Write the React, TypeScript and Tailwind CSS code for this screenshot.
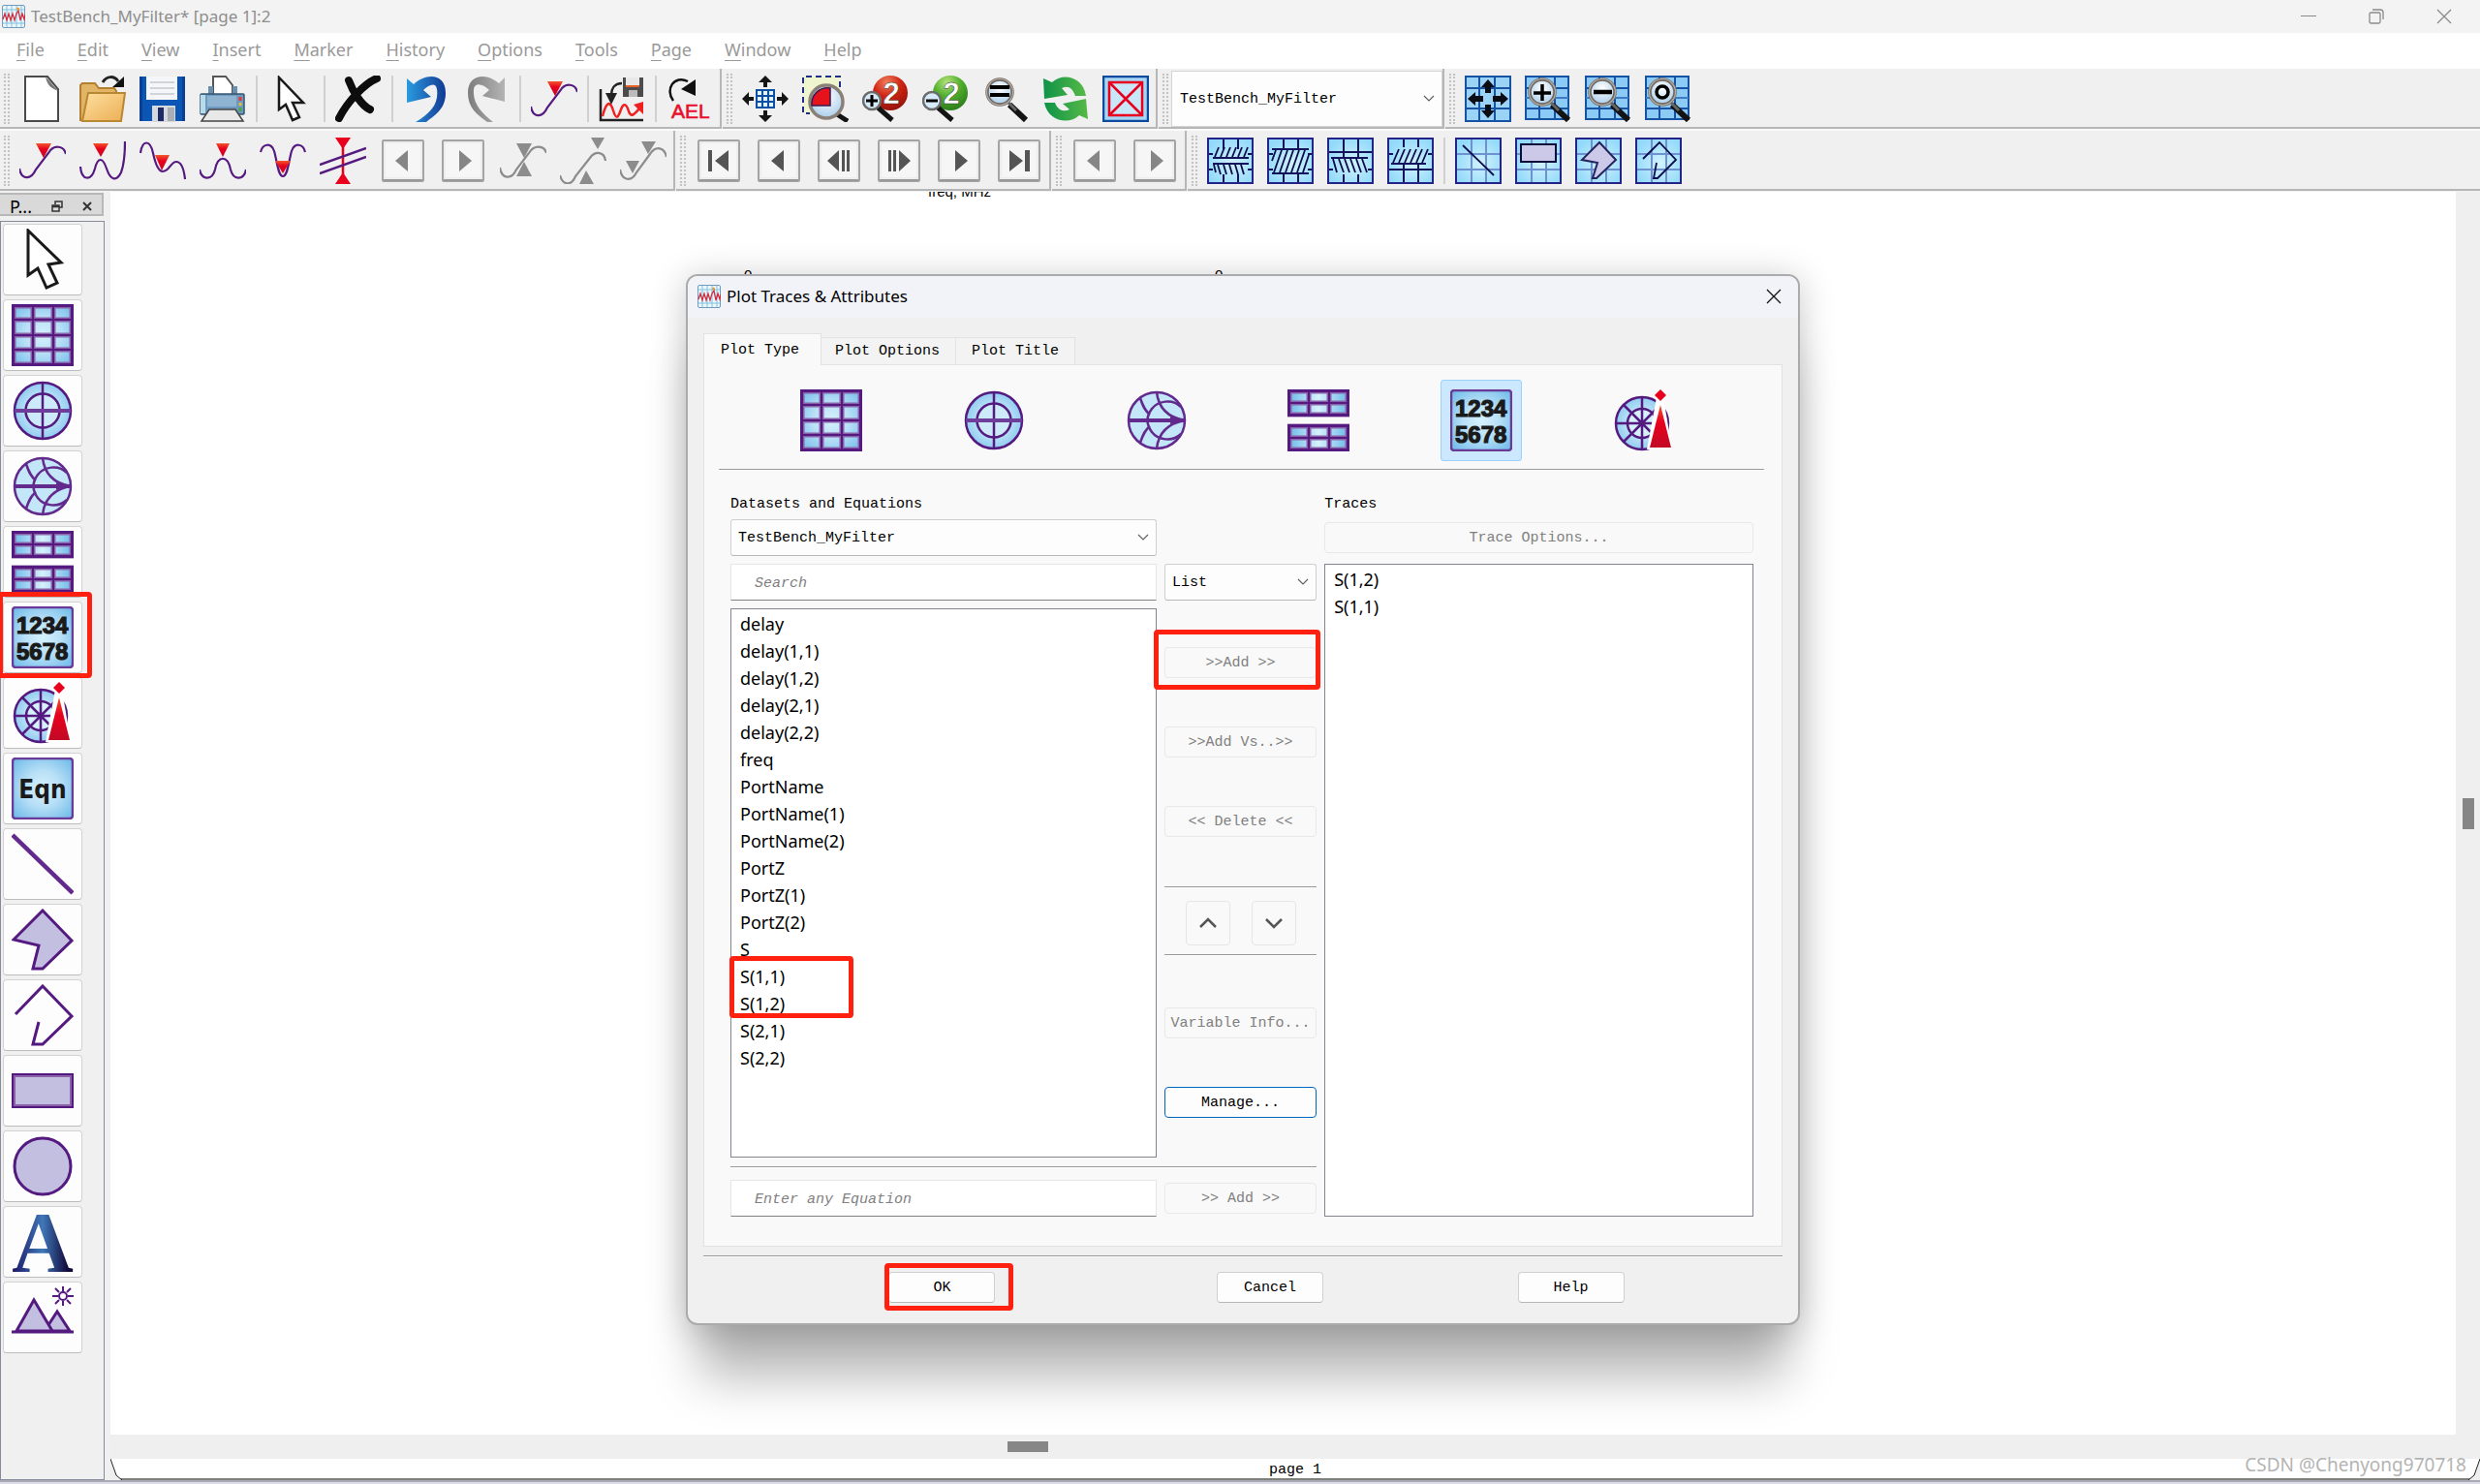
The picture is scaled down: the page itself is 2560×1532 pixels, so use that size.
import { useState } from 'react';
import type { ReactNode } from 'react';
import clsx from 'clsx';

const PURPLE = '#551a80';
const NAVY = '#23238a';

const MENUS = ['File', 'Edit', 'View', 'Insert', 'Marker', 'History', 'Options', 'Tools', 'Page', 'Window', 'Help'];

const VARIABLES = [
  'delay', 'delay(1,1)', 'delay(1,2)', 'delay(2,1)', 'delay(2,2)', 'freq',
  'PortName', 'PortName(1)', 'PortName(2)', 'PortZ', 'PortZ(1)', 'PortZ(2)',
  'S', 'S(1,1)', 'S(1,2)', 'S(2,1)', 'S(2,2)',
];

const TRACES = ['S(1,2)', 'S(1,1)'];

/* ---------- shared gradients ---------- */

function Gradients() {
  return (
    <svg className="absolute h-0 w-0" aria-hidden="true">
      <defs>
        <radialGradient id="sky" cx="50%" cy="50%" r="65%">
          <stop offset="0" stopColor="#d6f1fd" />
          <stop offset="0.45" stopColor="#b9e0f7" />
          <stop offset="1" stopColor="#74bdea" />
        </radialGradient>
        <linearGradient id="band" x1="0" x2="1">
          <stop offset="0.05" stopColor="#74bdea" />
          <stop offset="0.5" stopColor="#d6f1fd" />
          <stop offset="0.95" stopColor="#74bdea" />
        </linearGradient>
        <radialGradient id="aqua" cx="55%" cy="55%" r="60%">
          <stop offset="0" stopColor="#d2f2fd" />
          <stop offset="1" stopColor="#93dafa" />
        </radialGradient>
        <linearGradient id="red" x1="0" x2="0" y1="0" y2="1">
          <stop offset="0" stopColor="#f2552c" />
          <stop offset="0.4" stopColor="#e8001d" />
          <stop offset="1" stopColor="#c20a26" />
        </linearGradient>
        <linearGradient id="undo" x1="0" x2="1">
          <stop offset="0" stopColor="#2a9be0" />
          <stop offset="1" stopColor="#123a94" />
        </linearGradient>
        <linearGradient id="redo" x1="0" x2="1">
          <stop offset="0" stopColor="#7d7d7d" />
          <stop offset="1" stopColor="#b4b4b4" />
        </linearGradient>
        <linearGradient id="letter" x1="0" x2="1">
          <stop offset="0" stopColor="#1b1464" />
          <stop offset="0.5" stopColor="#3f78b8" />
          <stop offset="0.9" stopColor="#120a3c" />
        </linearGradient>
        <linearGradient id="folder" x1="0" x2="1" y1="0" y2="1">
          <stop offset="0" stopColor="#fde0a0" />
          <stop offset="1" stopColor="#ecae55" />
        </linearGradient>
        <linearGradient id="green" x1="0" x2="1">
          <stop offset="0" stopColor="#0e9347" />
          <stop offset="1" stopColor="#57b947" />
        </linearGradient>
        <radialGradient id="redBall" cx="40%" cy="20%" r="80%">
          <stop offset="0" stopColor="#f0805c" />
          <stop offset="0.5" stopColor="#cf2313" />
          <stop offset="1" stopColor="#98140c" />
        </radialGradient>
        <radialGradient id="greenBall" cx="40%" cy="20%" r="80%">
          <stop offset="0" stopColor="#b5e27c" />
          <stop offset="0.5" stopColor="#4fae2c" />
          <stop offset="1" stopColor="#2d7f1c" />
        </radialGradient>
        <radialGradient id="lens" cx="50%" cy="35%" r="65%">
          <stop offset="0" stopColor="#ffffff" />
          <stop offset="1" stopColor="#a9cdea" />
        </radialGradient>
      </defs>
    </svg>
  );
}

function Icon({ children, size = 48 }: { children: ReactNode; size?: 48 | 64 }) {
  return (
    <svg
      viewBox={size === 48 ? '0 0 48 48' : '0 0 64 64'}
      className={size === 48 ? 'size-12' : 'size-16'}
      fill="none"
      aria-hidden="true"
    >
      {children}
    </svg>
  );
}

function AppIcon() {
  return (
    <svg viewBox="0 0 24 24" className="size-6" fill="none" aria-hidden="true">
      <rect x="0.5" y="0.5" width="23" height="23" rx="1.5" fill="#eef6fa" stroke="#6d9cc0" />
      <path d="M5 1v22M10 1v22M15 1v22M20 1v22M1 5h22M1 19h22" stroke="#7cc4e4" />
      <path d="M1 15l2-6 2 7 2-7 2 7 2-7 2 7 2-7 2-3 2 10 2-7 2 6 1-5" stroke="#cc3040" strokeWidth="1.300" />
      <circle cx="16.500" cy="4" r="1.500" fill="#f09a28" />
    </svg>
  );
}

/* ---------- plot type icons ---------- */

const GRID_LINES = 'M2 2H62V62H2ZM22 2V62M43 2V62M2 16H62M2 32H62M2 47H62';
const STACK_LINES =
  'M2 2H62V26H2ZM22 2V26M43 2V26M2 14H62M2 38H62V62H2ZM22 38V62M43 38V62M2 50H62';

function RectPlotIcon() {
  return (
    <Icon size={64}>
      <rect width="64" height="64" fill="url(#sky)" />
      <path d={GRID_LINES} stroke="#8a60a8" strokeWidth="5" />
      <path d={GRID_LINES} stroke={PURPLE} strokeWidth="2" />
      <rect x="1" y="1" width="62" height="62" stroke={PURPLE} strokeWidth="2" />
    </Icon>
  );
}

function PolarIcon() {
  return (
    <Icon size={64}>
      <circle cx="32" cy="32" r="29" fill="url(#sky)" stroke={PURPLE} strokeWidth="2.500" />
      <circle cx="32" cy="32" r="17.500" fill="#cdeafa" stroke={PURPLE} strokeWidth="2.500" />
      <path d="M32 3V61" stroke={PURPLE} strokeWidth="2.500" />
      <path d="M3 32H61" stroke="#6d3f9a" strokeWidth="4" />
    </Icon>
  );
}

function SmithIcon() {
  return (
    <Icon size={64}>
      <circle cx="32" cy="32" r="29" fill="#c4e6f9" stroke="#632a8e" strokeWidth="2.500" />
      <g stroke="#632a8e" strokeWidth="2.500">
        <path d="M57 18C48 9 33 12 27 20C21 28 21 36 27 44C33 52 48 55 57 46" />
        <path d="M32 3C34 20 44 29 61 32C44 35 34 44 32 61" />
        <path d="M15 9C18 18 20 22 25 26M15 55C18 46 20 42 25 38" />
        <path d="M3 32H61" strokeWidth="4" />
      </g>
      <path d="M46 28L61 32L46 36Z" fill="#632a8e" />
    </Icon>
  );
}

function StackIcon() {
  return (
    <Icon size={64}>
      <rect width="64" height="28" fill="url(#band)" />
      <rect y="36" width="64" height="28" fill="url(#band)" />
      <path d={STACK_LINES} stroke="#8a60a8" strokeWidth="5" />
      <path d={STACK_LINES} stroke={PURPLE} strokeWidth="2" />
      <path d="M1 1H63V27H1ZM1 37H63V63H1Z" stroke={PURPLE} strokeWidth="2" />
    </Icon>
  );
}

function ListIcon() {
  return (
    <Icon size={64}>
      <rect x="1" y="1" width="62" height="62" rx="3" fill="url(#sky)" stroke="#6a3a98" strokeWidth="2.500" />
      <g fill="#1a1a1a" stroke="#1a1a1a" strokeWidth="1.200" fontFamily="Liberation Sans, sans-serif" fontWeight="700" fontSize="24">
        <text x="5" y="28">1234</text>
        <text x="5" y="55">5678</text>
      </g>
    </Icon>
  );
}

function AntennaIcon() {
  return (
    <Icon size={64}>
      <circle cx="30" cy="35" r="27" fill="url(#sky)" stroke={PURPLE} strokeWidth="2.500" />
      <circle cx="30" cy="35" r="15" fill="#d6f1fd" stroke={PURPLE} strokeWidth="2.500" />
      <path d="M30 8V62M3 35H57M11 16L49 54M49 16L11 54" stroke={PURPLE} strokeWidth="2.500" />
      <path d="M45 8H52L61 62H35Z" fill="#fff" />
      <path d="M49 16L60 60H38Z" fill="url(#red)" />
      <path d="M49 0L55 6L49 12L43 6Z" fill="#e8001d" />
    </Icon>
  );
}

function EqnIcon() {
  return (
    <Icon size={64}>
      <rect x="1" y="1" width="62" height="62" rx="3" fill="url(#sky)" stroke="#6a3a98" strokeWidth="2.500" />
      <text x="32" y="42" textAnchor="middle" fill="#1a1a1a" fontFamily="DejaVu Sans Condensed, DejaVu Sans, sans-serif" fontWeight="700" fontSize="26">
        Eqn
      </text>
    </Icon>
  );
}

const PALETTE: { name: string; icon: ReactNode; marked?: boolean }[] = [
  {
    name: 'Select',
    icon: (
      <Icon size={64}>
        <path d="M17 2V48L27 41L36 61L47 56L38 37L51 35Z" fill="#fff" stroke="#1a1a1a" strokeWidth="3" />
      </Icon>
    ),
  },
  { name: 'Rectangular plot', icon: <RectPlotIcon /> },
  { name: 'Polar plot', icon: <PolarIcon /> },
  { name: 'Smith chart', icon: <SmithIcon /> },
  { name: 'Stacked plot', icon: <StackIcon /> },
  { name: 'List plot', icon: <ListIcon />, marked: true },
  { name: 'Antenna plot', icon: <AntennaIcon /> },
  { name: 'Equation', icon: <EqnIcon /> },
  {
    name: 'Line',
    icon: (
      <Icon size={64}>
        <path d="M1 2L63 62" stroke="#632a8e" strokeWidth="4.500" />
      </Icon>
    ),
  },
  {
    name: 'Polygon',
    icon: (
      <Icon size={64}>
        <path d="M32 2L62 33L32 62H22L28 38L2 32Z" fill="#c2bfe0" stroke={PURPLE} strokeWidth="3" />
      </Icon>
    ),
  },
  {
    name: 'Polyline',
    icon: (
      <Icon size={64}>
        <path d="M4 31L32 2L62 33L32 62H22L28 39" stroke={PURPLE} strokeWidth="3" />
      </Icon>
    ),
  },
  {
    name: 'Rectangle',
    icon: (
      <Icon size={64}>
        <rect x="2" y="16" width="60" height="32" fill="#c2bfe0" stroke="#8a60a8" strokeWidth="4" />
        <rect x="1" y="15" width="62" height="34" stroke={PURPLE} strokeWidth="2" />
      </Icon>
    ),
  },
  {
    name: 'Circle',
    icon: (
      <Icon size={64}>
        <circle cx="32" cy="32" r="29" fill="#c2bfe0" stroke={PURPLE} strokeWidth="3" />
      </Icon>
    ),
  },
  {
    name: 'Text',
    icon: (
      <Icon size={64}>
        <text x="32" y="62" textAnchor="middle" fill="url(#letter)" fontFamily="Liberation Serif, serif" fontWeight="700" fontSize="88">
          A
        </text>
      </Icon>
    ),
  },
  {
    name: 'Image',
    icon: (
      <Icon size={64}>
        <path d="M34 46L47 26L60 46Z" fill="#c2bfe0" stroke={PURPLE} strokeWidth="3" />
        <path d="M5 46L23 14L42 46Z" fill="#c2bfe0" stroke={PURPLE} strokeWidth="3" />
        <path d="M0 47H64" stroke={PURPLE} strokeWidth="3" />
        <circle cx="53" cy="10" r="4" stroke={PURPLE} strokeWidth="2" />
        <path d="M53 0V5M53 15V20M42 10H48M58 10H64M45 2L49 6M57 14L61 18M61 2L57 6M49 14L45 18" stroke={PURPLE} strokeWidth="2" />
      </Icon>
    ),
  },
];

/* ---------- toolbar icons ---------- */

function MarkerIcon({ curve, tips, disabled }: { curve: string; tips: string; disabled?: boolean }) {
  return (
    <Icon>
      <path d={curve} stroke={disabled ? '#8c8c8c' : PURPLE} strokeWidth="2.200" />
      <path d={tips} fill={disabled ? '#8c8c8c' : 'url(#red)'} />
    </Icon>
  );
}

const newMarker = <MarkerIcon curve="M0 32C2 44 12 44 17 33L30 16C35 7 46 8 48 17" tips="M17 6H33L25 21Z" />;

function BoxedIcon({ d, dim }: { d: string; dim?: boolean }) {
  return (
    <Icon>
      <rect x="3" y="3" width="42" height="42" rx="1" fill="#f6f6f6" stroke="#a4a4a4" strokeWidth="2" />
      <path d="M4 44H44" stroke="#999" strokeWidth="2" />
      <rect x="5" y="5" width="38" height="37" stroke="#e4e4e4" />
      <path d={d} fill={dim ? '#868686' : '#555'} />
    </Icon>
  );
}

const ARROW_LEFT = 'M29 13V35L16 24Z';
const ARROW_RIGHT = 'M20 13V35L33 24Z';

function Magnifier({ children }: { children?: ReactNode }) {
  return (
    <>
      <path d="M28 30L45 46" stroke="#141414" strokeWidth="6" />
      <path d="M27 28L35 36" stroke="#666" strokeWidth="3" />
      <circle cx="18" cy="17" r="13" fill="url(#lens)" stroke="#6e6863" strokeWidth="3.500" />
      <circle cx="18" cy="17" r="13.500" stroke="#b9aea4" strokeWidth="1.200" />
      {children}
    </>
  );
}

function SmallZoom({ ball, sign }: { ball: string; sign: string }) {
  return (
    <Icon>
      <circle cx="29" cy="18" r="18" fill={ball} />
      <text x="30" y="29" textAnchor="middle" fill="#fff" stroke="#333" strokeWidth="0.500" fontFamily="Liberation Sans, sans-serif" fontWeight="700" fontSize="31">
        2
      </text>
      <path d="M15 32L31 46" stroke="#141414" strokeWidth="5" />
      <circle cx="10" cy="26" r="9" fill="#d6ebfa" stroke="#6c6c6c" strokeWidth="2.500" />
      <path d={sign} stroke="#000" strokeWidth="3" />
    </Icon>
  );
}

function BlueGrid({ children }: { children: ReactNode }) {
  return (
    <Icon>
      <rect x="1" y="1" width="44" height="44" fill="#8ccbf5" stroke="#1653a5" strokeWidth="2" />
      <path d="M15 1V45M31 1V45M1 13H45M1 34H45" stroke="#1653a5" strokeWidth="2" />
      <path d="M1 23H45" stroke="#3d7cc4" strokeWidth="2" />
      {children}
    </Icon>
  );
}

function LimitIcon({ grid, limit, light, children }: { grid: string; limit?: string; light?: boolean; children?: ReactNode }) {
  return (
    <Icon>
      <rect x="1" y="1" width="46" height="46" fill="url(#aqua)" stroke={NAVY} strokeWidth="2" />
      <path d={grid} stroke={light ? '#6d92cf' : '#14145e'} strokeWidth="2" />
      {limit && <path d={limit} stroke="#0c0c4c" strokeWidth="1.800" />}
      {children}
    </Icon>
  );
}

const LIGHT_GRID = 'M17 2V46M32 2V46M2 17H46M2 33H46';

const fileIcons: Record<string, ReactNode> = {
  New: (
    <Icon>
      <path d="M6 1H29L40 14V47H6Z" fill="#fff" stroke="#4a4a4a" strokeWidth="2" />
      <path d="M27 1L40 16C34 13 29 12 27 1Z" fill="#777" />
    </Icon>
  ),
  Open: (
    <Icon>
      <path d="M1 47V10L3 8H16L20 13H36L38 16V22" fill="#e2b466" stroke="#b17f2e" strokeWidth="2" />
      <path d="M9 18H47L43 47H3Z" fill="url(#folder)" stroke="#b98832" strokeWidth="2" />
      <path d="M24 7C28 0 36 0 40 6" stroke="#222" strokeWidth="3" />
      <path d="M46 1V12H34Z" fill="#111" />
    </Icon>
  ),
  Save: (
    <Icon>
      <path d="M0 1H47V47H3L0 44Z" fill="#0b55b4" />
      <path d="M0 1H3V47H0ZM44 1H47V47H44Z" fill="#0a3f92" />
      <rect x="7" y="1" width="32" height="24" fill="#f4f6f8" />
      <path d="M11 7H36M11 13H36M11 19H36" stroke="#c4c8cc" strokeWidth="1.500" />
      <rect x="13" y="31" width="24" height="17" fill="#d5d9dd" />
      <rect x="19" y="33" width="6" height="14" fill="#1c2b68" />
      <rect x="29" y="33" width="7" height="14" fill="#a9aeb4" />
    </Icon>
  ),
  Print: (
    <Icon>
      <path d="M14 20V1H27L34 10V20" fill="#fff" stroke="#555" strokeWidth="2" />
      <path d="M9 11H14V20H9ZM34 11H39V20H34Z" fill="#6b8fae" />
      <rect x="1" y="19" width="45" height="21" rx="1" fill="#6f9abf" stroke="#35566f" strokeWidth="1.500" />
      <rect x="8" y="21" width="30" height="11" fill="#8fb4d1" />
      <rect x="1" y="20" width="5" height="19" fill="#b6dcec" />
      <path d="M42 22V26" stroke="#e33" strokeWidth="3" />
      <path d="M42 28V31" stroke="#e9b93c" strokeWidth="3" />
      <path d="M42 33V37" stroke="#49a83f" strokeWidth="3" />
      <path d="M10 35H37L45 47H2Z" fill="#e8e8e8" stroke="#444" strokeWidth="1.500" />
    </Icon>
  ),
};

const FileTools = () => (
  <>
    {Object.entries(fileIcons).map(([name, icon]) => (
      <Tool key={name} name={name}>{icon}</Tool>
    ))}
    <Divider />
    <Tool name="Pointer">
      <Icon>
        <path d="M12 2V35L19 30L26 46L33 43L26 28H37Z" fill="#fff" stroke="#1a1a1a" strokeWidth="2.500" />
      </Icon>
    </Tool>
    <Divider />
    <Tool name="Delete">
      <Icon>
        <path d="M14 5C18 16 27 31 36 35M43 3C30 8 12 28 4 44" stroke="#0d0d0d" strokeWidth="8" strokeLinecap="round" />
      </Icon>
    </Tool>
    <Divider />
    <Tool name="Undo">
      <Icon>
        <path d="M4 28V3L11 9C22 -2 44 -4 44 18C44 34 34 40 24 48H13C30 38 37 28 35 14C34 7 27 9 21 15L29 22Z" fill="url(#undo)" />
      </Icon>
    </Tool>
    <Tool name="Redo">
      <Icon>
        <path d="M43 27V2L37 8C26 -2 5 -3 5 18C5 33 14 40 25 48H31C20 39 10 30 11 15C12 6 21 9 27 15L20 21Z" fill="url(#redo)" />
      </Icon>
    </Tool>
    <Divider />
    <Tool name="New marker">{newMarker}</Tool>
    <Divider />
    <Tool name="Data file tool">
      <Icon>
        <path d="M2 14V46H46" stroke="#222" strokeWidth="2.500" />
        <path d="M4 42C8 26 12 26 15 36C18 46 20 44 23 35C26 27 29 30 31 37C34 45 38 38 43 33" stroke="#f02020" strokeWidth="2.500" />
        <path d="M36 30L46 27V40Z" fill="#f02020" />
        <rect x="25" y="2" width="21" height="20" fill="#4c4c4c" />
        <rect x="28" y="2" width="14" height="9" fill="#e8e8e8" />
        <path d="M28 11H42" stroke="#e76023" strokeWidth="2" />
        <rect x="31" y="15" width="9" height="7" fill="#bbb" />
        <path d="M24 8C16 8 13 14 13 20" stroke="#222" strokeWidth="2.500" />
        <path d="M7 18H19L13 30Z" fill="#222" />
      </Icon>
    </Tool>
    <Divider />
    <Tool name="AEL">
      <Icon>
        <path d="M7 26C-2 14 8 -1 22 6" stroke="#111" strokeWidth="2.500" />
        <path d="M30 4V21L15 14Z" fill="#111" />
        <text x="5" y="44" fill="#e80f2c" stroke="#e80f2c" strokeWidth="0.600" fontFamily="Liberation Sans, sans-serif" fontSize="21">
          AEL
        </text>
      </Icon>
    </Tool>
  </>
);

const ViewTools = () => (
  <>
    <Tool name="View all">
      <Icon>
        <rect x="15" y="15" width="18" height="18" fill="#e3f6ff" />
        <path d="M15 15H33V33H15ZM21 15V33M27 15V33M15 21H33M15 27H33" stroke="#0c50a4" strokeWidth="2" />
        <path d="M24 0L31 7H26V12H22V7H17ZM24 48L31 41H26V36H22V41H17ZM0 24L7 17V22H12V26H7V31ZM48 24L41 17V22H36V26H41V31Z" fill="#151515" />
      </Icon>
    </Tool>
    <Tool name="Zoom area">
      <Icon>
        <path d="M1 1H39V39H1Z" fill="#eef5cf" />
        <path d="M39 12V1H1V39H8" stroke="#1f2f86" strokeWidth="2" strokeDasharray="6 4" />
        <path d="M36 40L47 47" stroke="#141414" strokeWidth="5" />
        <circle cx="25" cy="27" r="17" fill="url(#lens)" stroke="#8a8078" strokeWidth="3.500" />
        <path d="M29 13V31H10C9 20 18 11 29 13Z" fill="#e6131c" stroke="#3a1a50" strokeWidth="1.500" />
      </Icon>
    </Tool>
    <Tool name="Zoom in by 2"><SmallZoom ball="url(#redBall)" sign="M10 20V32M4 26H16" /></Tool>
    <Tool name="Zoom out by 2"><SmallZoom ball="url(#greenBall)" sign="M4 26H16" /></Tool>
    <Tool name="Zoom restore">
      <Icon>
        <Magnifier>
          <path d="M8 12H28M8 20H28" stroke="#000" strokeWidth="4" />
        </Magnifier>
      </Icon>
    </Tool>
    <Tool name="Refresh">
      <Icon>
        <path d="M1 3L10 7C20 -3 42 0 45 21H34C31 12 26 10 20 13L26 20L2 24Z" fill="url(#green)" />
        <path d="M47 45L38 41C28 51 6 48 2 28H13C16 36 22 38 28 35L21 29L45 24Z" fill="url(#green)" />
      </Icon>
    </Tool>
    <Tool name="Stop">
      <Icon>
        <rect x="1" y="1" width="46" height="46" fill="#a7d6f5" stroke="#0c4aa0" strokeWidth="2.500" />
        <rect x="7" y="7" width="34" height="34" fill="#c8e8fa" stroke="#e8001d" strokeWidth="2.500" />
        <path d="M8 8L40 40M40 8L8 40" stroke="#e8001d" strokeWidth="2.500" />
      </Icon>
    </Tool>
  </>
);

const PlotZoomTools = () => (
  <>
    <Tool name="Plot view all">
      <Icon>
        <rect x="1" y="1" width="46" height="46" fill="#9bd3f7" stroke="#1653a5" strokeWidth="2" />
        <path d="M15 1V47M31 1V47M1 13H47M1 34H47" stroke="#1653a5" strokeWidth="2" />
        <path d="M24 4L31 12H27V18H21V12H17ZM24 44L31 36H27V30H21V36H17ZM3 24L11 17V21H19V27H11V31ZM45 24L37 17V21H29V27H37V31Z" fill="#0c0c14" />
      </Icon>
    </Tool>
    <Tool name="Plot zoom in">
      <BlueGrid><Magnifier><path d="M18 9V26M9 18H27" stroke="#000" strokeWidth="3.500" /></Magnifier></BlueGrid>
    </Tool>
    <Tool name="Plot zoom out">
      <BlueGrid><Magnifier><path d="M9 17H28" stroke="#000" strokeWidth="4.500" /></Magnifier></BlueGrid>
    </Tool>
    <Tool name="Plot zoom area">
      <BlueGrid><Magnifier><circle cx="18" cy="17" r="6" stroke="#000" strokeWidth="3.500" /></Magnifier></BlueGrid>
    </Tool>
  </>
);

const MarkerTools = () => (
  <>
    <Tool name="Marker">{newMarker}</Tool>
    <Tool name="Peak marker">
      <MarkerIcon curve="M1 30C2 44 12 46 16 32C19 20 24 20 28 32C32 44 38 46 43 36Q47 25 47 4" tips="M14 6H30L22 20Z" />
    </Tool>
    <Tool name="Valley marker">
      <MarkerIcon curve="M1 16C3 2 11 2 14 16C17 30 20 35 24 35C31 35 32 25 38 25C44 25 46 34 47 43" tips="M16 18H31L23 34Z" />
    </Tool>
    <Tool name="Max marker">
      <MarkerIcon curve="M0 33C2 44 13 45 16 33C19 18 29 18 32 33C35 45 46 44 48 33" tips="M17 6H31L24 20Z" />
    </Tool>
    <Tool name="Min marker">
      <MarkerIcon curve="M1 15C3 6 12 5 15 14C18 24 19 40 24 40C29 40 30 24 33 14C36 5 45 6 47 15" tips="M16 24H32L24 37Z" />
    </Tool>
    <Tool name="Line marker">
      <Icon>
        <path d="M24 0V48" stroke="#e8001d" strokeWidth="2.500" />
        <path d="M16 0H32L24 12ZM16 48H32L24 36Z" fill="#e8001d" />
        <path d="M0 28L48 11M0 37L48 20" stroke={PURPLE} strokeWidth="2.500" />
      </Icon>
    </Tool>
    <Tool name="Marker left"><BoxedIcon d={ARROW_LEFT} dim /></Tool>
    <Tool name="Marker right"><BoxedIcon d={ARROW_RIGHT} dim /></Tool>
    <Tool name="Delta marker">
      <MarkerIcon disabled curve="M0 31C2 43 12 44 17 33L30 16C35 7 46 8 48 16" tips="M17 6H33L25 21ZM17 40H33L25 25Z" />
    </Tool>
    <Tool name="Marker up">
      <MarkerIcon disabled curve="M0 39C3 50 12 50 16 40L31 21C37 13 46 15 47 24" tips="M32 0H46L39 12ZM20 48H35L27 34Z" />
    </Tool>
    <Tool name="Marker pair">
      <MarkerIcon disabled curve="M0 33C2 45 12 46 17 36L31 17C37 8 46 10 48 20" tips="M22 4H37L29 17ZM6 24H20L13 37Z" />
    </Tool>
  </>
);

const HistoryTools = () => (
  <>
    <Tool name="First"><BoxedIcon d="M13 13H17V35H13ZM34 13V35L20 24Z" /></Tool>
    <Tool name="Previous"><BoxedIcon d={ARROW_LEFT} /></Tool>
    <Tool name="Step back"><BoxedIcon d="M24 13V35L12 24ZM27 13H30V35H27ZM32 13H35V35H32Z" /></Tool>
    <Tool name="Step forward"><BoxedIcon d="M24 13V35L36 24ZM13 13H16V35H13ZM18 13H21V35H18Z" /></Tool>
    <Tool name="Next"><BoxedIcon d={ARROW_RIGHT} /></Tool>
    <Tool name="Last"><BoxedIcon d="M30 13H35V35H30ZM14 13V35L28 24Z" /></Tool>
  </>
);

const LimitTools = () => (
  <>
    <Tool name="Limit both">
      <LimitIcon
        grid="M17 2V12M32 2V12M17 38V46M32 38V46M2 17H6M42 17H46M2 33H6M42 33H46M6 21H43M6 27H43"
        limit="M8 20L12 10M14 20L18 10M20 20L24 10M26 20L30 10M32 20L36 10M38 20L42 10M11 28L14 38M17 28L20 38M23 28L26 38M29 28L32 38M35 28L38 38M7 28L9 36"
      />
    </Tool>
    <Tool name="Limit inside">
      <LimitIcon
        grid="M17 2V12M32 2V12M17 37V46M32 37V46M2 17H6M42 17H46M2 33H6M42 33H46M5 12H43M5 37H43"
        limit="M5 24L9 13M7 36L15 13M13 36L21 13M19 36L27 13M25 36L33 13M31 36L39 13M37 36L43 18"
      />
    </Tool>
    <Tool name="Limit below">
      <LimitIcon
        grid="M17 2V20M32 2V20M2 15H46M4 21H42M2 33H6M42 33H46M17 38V46M32 38V46"
        limit="M6 22L10 36M12 22L17 36M18 22L23 36M24 22L29 36M30 22L35 36M36 22L41 36"
      />
    </Tool>
    <Tool name="Limit above">
      <LimitIcon
        grid="M17 2V10M32 2V10M2 17H6M42 17H46M4 27H40M2 33H46M17 28V46M32 28V46"
        limit="M6 26L12 12M12 26L18 12M18 26L24 12M24 26L30 12M30 26L36 12M36 26L42 12"
      />
    </Tool>
    <Divider />
    <Tool name="Plot line"><LimitIcon light grid={LIGHT_GRID} limit="M8 8L40 39" /></Tool>
    <Tool name="Plot rectangle">
      <LimitIcon light grid={LIGHT_GRID}>
        <rect x="6" y="7" width="36" height="18" fill="#ccc8e8" stroke="#0c0c3c" strokeWidth="2" />
      </LimitIcon>
    </Tool>
    <Tool name="Plot polygon">
      <LimitIcon light grid={LIGHT_GRID}>
        <path d="M25 5L42 23L22 42H18L23 26L7 23Z" fill="#ccc8e8" stroke="#23235e" strokeWidth="2" />
      </LimitIcon>
    </Tool>
    <Tool name="Plot polyline">
      <LimitIcon light grid={LIGHT_GRID} limit="M8 22L25 5L42 23L23 42H19L22 26" />
    </Tool>
  </>
);

/* ---------- chrome ---------- */

function Tool({ name, children }: { name: string; children: ReactNode }) {
  return (
    <button type="button" aria-label={name} className="shrink-0 px-[7px]">
      {children}
    </button>
  );
}

function Divider() {
  return (
    <span className="flex w-2 shrink-0 justify-center">
      <span className="h-12 w-0.5 bg-[#d0d0d0]" />
    </span>
  );
}

function ToolGroup({ children, last }: { children: ReactNode; last?: boolean }) {
  return (
    <div
      className={clsx(
        'flex h-full items-center border-b-2 border-[#b6b6b6] pt-0.5',
        last ? 'flex-1' : 'mr-px border-r-2',
      )}
    >
      <span className="flex w-[13px] shrink-0 justify-center gap-0.5">
        <span className="h-[52px] border-l-2 border-dotted border-[#c2c2c2]" />
        <span className="h-[52px] border-l-2 border-dotted border-[#c2c2c2]" />
      </span>
      {children}
    </div>
  );
}

function Chevron() {
  return (
    <svg viewBox="0 0 12 8" className="pointer-events-none absolute top-1/2 right-2 h-2 w-3 -translate-y-1/2" fill="none" aria-hidden="true">
      <path d="M1 1L6 6L11 1" stroke="#606060" strokeWidth="1.200" />
    </svg>
  );
}

function Highlight({ className }: { className: string }) {
  return <span className={clsx('pointer-events-none absolute z-10 rounded-[4px] border-[5px] border-[#ff2010]', className)} />;
}

function Rule({ className }: { className?: string }) {
  return <div className={clsx('h-0.5 border-t border-[#999] bg-white', className)} />;
}

function PushButton({ children, disabled, focused }: { children: ReactNode; disabled?: boolean; focused?: boolean }) {
  return (
    <button
      type="button"
      disabled={disabled}
      className={clsx(
        'h-8 w-full rounded-[4px] border pt-0.5 text-center whitespace-nowrap',
        disabled && 'border-[#e8e8e8] bg-[#f9f9f9] text-[#808080]',
        !disabled && !focused && 'border-[#d0d0d0] border-b-[#b8b8b8] bg-[#fdfdfd]',
        focused && 'border-[#0067c0] bg-[#fdfdfd]',
      )}
    >
      {children}
    </button>
  );
}

function Titlebar() {
  return (
    <header className="flex h-[34px] shrink-0 items-center bg-[#f3f3f3] pr-0.5 pl-0.5 text-[17px] text-[#8e8e8e]">
      <AppIcon />
      <span className="ml-1.5">TestBench_MyFilter* [page 1]:2</span>
      <div className="ml-auto flex">
        <button type="button" aria-label="Minimize" className="flex w-[70px] justify-center">
          <svg viewBox="0 0 16 16" className="size-4" fill="none" stroke="#8a8a8a"><path d="M0 7.500H16" /></svg>
        </button>
        <button type="button" aria-label="Restore" className="flex w-[70px] justify-center">
          <svg viewBox="0 0 16 16" className="size-4" fill="none" stroke="#8a8a8a" strokeWidth="1.300">
            <rect x="1" y="4" width="11" height="11" rx="1.500" />
            <path d="M4 1H12Q15 1 15 4V11" />
          </svg>
        </button>
        <button type="button" aria-label="Close" className="flex w-[70px] justify-center">
          <svg viewBox="0 0 16 16" className="size-4" fill="none" stroke="#8a8a8a" strokeWidth="1.300"><path d="M1 1L15 15M15 1L1 15" /></svg>
        </button>
      </div>
    </header>
  );
}

function Palette() {
  return (
    <aside className="flex w-[108px] shrink-0 flex-col pt-px">
      <div className="flex h-6 w-[107px] items-center border-2 border-l-0 border-[#b8b8b8] bg-[#d9d9d9] pt-1 pl-2.5 text-lg">
        <span className="leading-5">P...</span>
        <svg viewBox="0 0 12 12" className="ml-auto size-3" fill="none" stroke="#333" strokeWidth="1.500">
          <path d="M4 4V1H11V7H8M1 5H8V11H1ZM1 6.500H8" />
        </svg>
        <svg viewBox="0 0 10 10" className="mr-2.5 ml-5 size-2.5" stroke="#333" strokeWidth="2"><path d="M1 1L9 9M9 1L1 9" /></svg>
      </div>
      <div className="mt-[5px] flex flex-1 flex-col gap-1 border border-[#868a9a] py-0.5 pl-0.5">
        {PALETTE.map((item) => (
          <div key={item.name} className="relative w-[82px]">
            <button
              type="button"
              aria-label={item.name}
              className="flex h-[74px] w-full items-center justify-center rounded-[4px] border border-[#d2d2d2] border-b-[#bcbcbc] bg-[#fdfdfd]"
            >
              {item.icon}
            </button>
            {item.marked && <Highlight className="-top-2.5 -right-2.5 -bottom-[5px] -left-[5px]" />}
          </div>
        ))}
      </div>
    </aside>
  );
}

function Canvas() {
  return (
    <main className="flex min-w-0 flex-1 flex-col pl-1.5 font-['Liberation_Mono',monospace] text-[15px]">
      <div className="flex min-h-0 flex-1">
        <div className="relative flex-1 overflow-hidden bg-white font-['Liberation_Sans',sans-serif] leading-4">
          <span className="absolute -top-2 left-[844px]">freq, MHz</span>
          <span className="absolute top-[78px] left-[654px]">0</span>
          <span className="absolute top-[78px] left-[1140px]">0</span>
        </div>
        <div className="flex w-[25px] items-center justify-center bg-[#efefef]">
          <span className="h-8 w-3 bg-[#868686]" />
        </div>
      </div>
      <div className="flex h-[25px] items-center justify-center bg-[#efefef]">
        <span className="mr-[552px] h-[11px] w-[42px] bg-[#868686]" />
      </div>
      <div className="relative h-[22px] border-b-2 border-[#7e817b] bg-white pt-px text-center">
        <svg viewBox="0 0 12 22" className="absolute top-0 left-0 h-[22px] w-3" fill="none">
          <path d="M0 0L6 17L12 22H0Z" fill="#efefef" />
          <path d="M0 0L6 17L12 22" stroke="#222" />
        </svg>
        <svg viewBox="0 0 12 22" className="absolute top-0 right-0 h-[22px] w-3" fill="none">
          <path d="M12 0L6 17L0 22H12Z" fill="#efefef" />
          <path d="M12 0L6 17L0 22" stroke="#222" />
        </svg>
        <span>page 1</span>
      </div>
    </main>
  );
}

/* ---------- dialog ---------- */

const PLOT_TYPES = [
  { id: 'rect', label: 'Rectangular', icon: <RectPlotIcon /> },
  { id: 'polar', label: 'Polar', icon: <PolarIcon /> },
  { id: 'smith', label: 'Smith', icon: <SmithIcon /> },
  { id: 'stack', label: 'Stacked', icon: <StackIcon /> },
  { id: 'list', label: 'List', icon: <ListIcon /> },
  { id: 'antenna', label: 'Antenna', icon: <AntennaIcon /> },
];

const FIELD = 'h-[38px] w-full border border-[#e6e6e6] border-b-[#808080] bg-white pt-0.5 pl-6 italic placeholder:text-[#808080]';
const COMBO = 'h-[38px] w-full appearance-none rounded-[3px] border border-[#cfcfcf] border-b-[#b8b8b8] bg-[#fdfdfd] pt-0.5 pl-[7px]';
const LIST = "border border-[#82858f] bg-white px-[9px] py-px font-['Noto_Sans',sans-serif] text-lg leading-7";

function PlotDialog() {
  const [tab, setTab] = useState('Plot Type');
  const [plotType, setPlotType] = useState('list');

  return (
    <div
      role="dialog"
      aria-label="Plot Traces & Attributes"
      className="absolute top-[283px] left-[708px] w-[1150px] overflow-visible rounded-xl border-2 border-[#ababab] bg-[#f0f0f0] font-['Liberation_Mono',monospace] text-[15px] shadow-[0_4px_36px_rgba(0,0,0,0.22),0_68px_48px_-14px_rgba(0,0,0,0.28)]"
    >
      {/* Title */}
      <div className="flex h-[43px] items-center rounded-t-[10px] bg-[#f2f3f9] pb-0.5 pl-2.5 font-['Noto_Sans',sans-serif] text-[17px]">
        <AppIcon />
        <span className="ml-1.5">Plot Traces &amp; Attributes</span>
        <button type="button" aria-label="Close" className="mr-[17px] ml-auto">
          <svg viewBox="0 0 16 16" className="size-4" stroke="#111" strokeWidth="1.300"><path d="M1 1L15 15M15 1L1 15" /></svg>
        </button>
      </div>

      <div className="px-4 pt-4 pb-[21px]">
        {/* Tabs */}
        <div className="flex items-end" role="tablist">
          {['Plot Type', 'Plot Options', 'Plot Title'].map((name) => (
            <button
              key={name}
              type="button"
              role="tab"
              aria-selected={tab === name}
              onClick={() => setTab(name)}
              className={clsx(
                'border border-b-0 border-[#e2e2e2] pt-0.5',
                tab === name ? 'relative z-10 -mb-px h-[33px] bg-[#f9f9f9] pr-[22px] pl-[17px]' : 'h-7 border-l-0 bg-[#f3f3f3] px-4 nth-2:pl-3.5',
              )}
            >
              {name}
            </button>
          ))}
        </div>

        <div className="border border-[#e2e2e2] bg-[#f9f9f9] pb-[30px]">
          {/* Plot types */}
          <div className="grid grid-cols-6 justify-items-center pt-[15px] pr-[58px] pl-[47px]">
            {PLOT_TYPES.map((type) => (
              <button
                key={type.id}
                type="button"
                aria-label={type.label}
                aria-pressed={plotType === type.id}
                onClick={() => setPlotType(type.id)}
                className={clsx(
                  'flex size-[84px] items-center justify-center rounded-[3px] border',
                  plotType === type.id ? 'border-[#99d1ff] bg-[#cce8ff]' : 'border-transparent',
                )}
              >
                {type.icon}
              </button>
            ))}
          </div>
          <Rule className="mt-2 mr-[18px] ml-[15px]" />

          <div className="mt-[23px] flex gap-2 pr-[29px] pl-[27px]">
            {/* Datasets and actions */}
            <div className="flex-[604]">
              <label htmlFor="dataset" className="block leading-6">Datasets and Equations</label>
              <div className="relative mt-[3px] w-[440px]">
                <select id="dataset" className={COMBO}>
                  <option>TestBench_MyFilter</option>
                </select>
                <Chevron />
              </div>
              <div className="mt-2 grid grid-cols-[440px_1fr] gap-x-2">
                <input aria-label="Search" placeholder="Search" className={FIELD} />
                <div className="relative">
                  <select aria-label="View mode" className={COMBO}>
                    <option>List</option>
                  </select>
                  <Chevron />
                </div>
              </div>

              <div className="mt-2 grid grid-cols-[440px_1fr] gap-x-2">
                <ul className={LIST}>
                  {VARIABLES.map((name) => (
                    <li key={name} className="relative">
                      {name}
                      {name === 'S(1,1)' && <Highlight className="-top-[7px] -left-[11px] h-16 w-32" />}
                    </li>
                  ))}
                </ul>
                <div className="pt-10 pb-[41px]">
                  <div className="flex flex-col gap-[50px]">
                    <div className="relative">
                      <PushButton disabled>&gt;&gt;Add &gt;&gt;</PushButton>
                      <Highlight className="-top-[18px] -right-1 -bottom-3 -left-[11px]" />
                    </div>
                    <PushButton disabled>&gt;&gt;Add Vs..&gt;&gt;</PushButton>
                    <PushButton disabled>&lt;&lt; Delete &lt;&lt;</PushButton>
                  </div>
                  <Rule className="mt-[51px]" />
                  <div className="mt-[13px] flex justify-center gap-[22px]">
                    {['M4 15L12 7L20 15', 'M4 7L12 15L20 7'].map((d, i) => (
                      <button
                        key={d}
                        type="button"
                        aria-label={i === 0 ? 'Move up' : 'Move down'}
                        className="flex h-[46px] w-[46px] items-center justify-center rounded-[4px] border border-[#e6e6e6]"
                      >
                        <svg viewBox="0 0 24 22" className="h-[22px] w-6" fill="none" stroke="#555" strokeWidth="2.500"><path d={d} /></svg>
                      </button>
                    ))}
                  </div>
                  <Rule className="mt-[9px]" />
                  <div className="mt-[53px] flex flex-col gap-[50px]">
                    <PushButton disabled>Variable Info...</PushButton>
                    <PushButton focused>Manage...</PushButton>
                  </div>
                </div>
              </div>

              <Rule className="mt-[9px]" />
              <div className="mt-3 grid grid-cols-[440px_1fr] items-center gap-x-2">
                <input aria-label="Equation" placeholder="Enter any Equation" className={FIELD} />
                <PushButton disabled>&gt;&gt; Add &gt;&gt;</PushButton>
              </div>
            </div>

            {/* Traces */}
            <div className="flex flex-[442] flex-col">
              <span className="leading-6">Traces</span>
              <div className="mt-1.5 mb-[11px]">
                <PushButton disabled>Trace Options...</PushButton>
              </div>
              <ul className={clsx(LIST, 'flex-1')}>
                {TRACES.map((name) => (
                  <li key={name}>{name}</li>
                ))}
              </ul>
            </div>
          </div>
        </div>

        <Rule className="mt-[9px]" />
        <div className="mt-[15px] grid grid-cols-[492fr_184fr_436fr] justify-items-center">
          <div className="relative w-[110px]">
            <PushButton>OK</PushButton>
            <Highlight className="-top-[9px] -right-[19px] -bottom-2 -left-1" />
          </div>
          <div className="w-[110px]"><PushButton>Cancel</PushButton></div>
          <div className="w-[110px]"><PushButton>Help</PushButton></div>
        </div>
      </div>
    </div>
  );
}

export default function App() {
  return (
    <div className="relative flex h-screen flex-col overflow-hidden bg-[#f0f0f0] font-['Noto_Sans',sans-serif] text-black">
      <Gradients />
      <Titlebar />

      <nav className="flex h-9 shrink-0 items-center bg-white pb-0.5 text-lg text-[#9a9a9a]">
        {MENUS.map((menu) => (
          <button key={menu} type="button" className="px-[17px]">
            <span className="underline underline-offset-4">{menu[0]}</span>
            {menu.slice(1)}
          </button>
        ))}
      </nav>

      {/* Toolbars */}
      <div className="flex h-[63px] shrink-0 border-t border-white">
        <ToolGroup><FileTools /></ToolGroup>
        <ToolGroup><ViewTools /></ToolGroup>
        <ToolGroup>
          <div className="relative h-full w-[280px]">
            <select
              aria-label="Default dataset"
              className="h-full w-full appearance-none border border-[#d4d4d4] bg-[#fdfdfd] pt-0.5 pl-2 font-['Liberation_Mono',monospace] text-[15px]"
            >
              <option>TestBench_MyFilter</option>
            </select>
            <Chevron />
          </div>
        </ToolGroup>
        <ToolGroup last><PlotZoomTools /></ToolGroup>
      </div>
      <div className="flex h-16 shrink-0 border-t-2 border-[#fafafa]">
        <ToolGroup><MarkerTools /></ToolGroup>
        <ToolGroup><HistoryTools /></ToolGroup>
        <ToolGroup>
          <Tool name="Page back"><BoxedIcon d={ARROW_LEFT} dim /></Tool>
          <Tool name="Page forward"><BoxedIcon d={ARROW_RIGHT} dim /></Tool>
        </ToolGroup>
        <ToolGroup last><LimitTools /></ToolGroup>
      </div>

      <div className="flex min-h-0 flex-1 pt-px">
        <Palette />
        <Canvas />
      </div>
      <div className="h-1 shrink-0 border-t-2 border-[#a9a9b5] bg-[#dcdce9]" />

      <PlotDialog />
      <span className="absolute right-3.5 bottom-2 text-[19px] leading-6 text-[#b4b4b4]">CSDN @Chenyong970718</span>
    </div>
  );
}
